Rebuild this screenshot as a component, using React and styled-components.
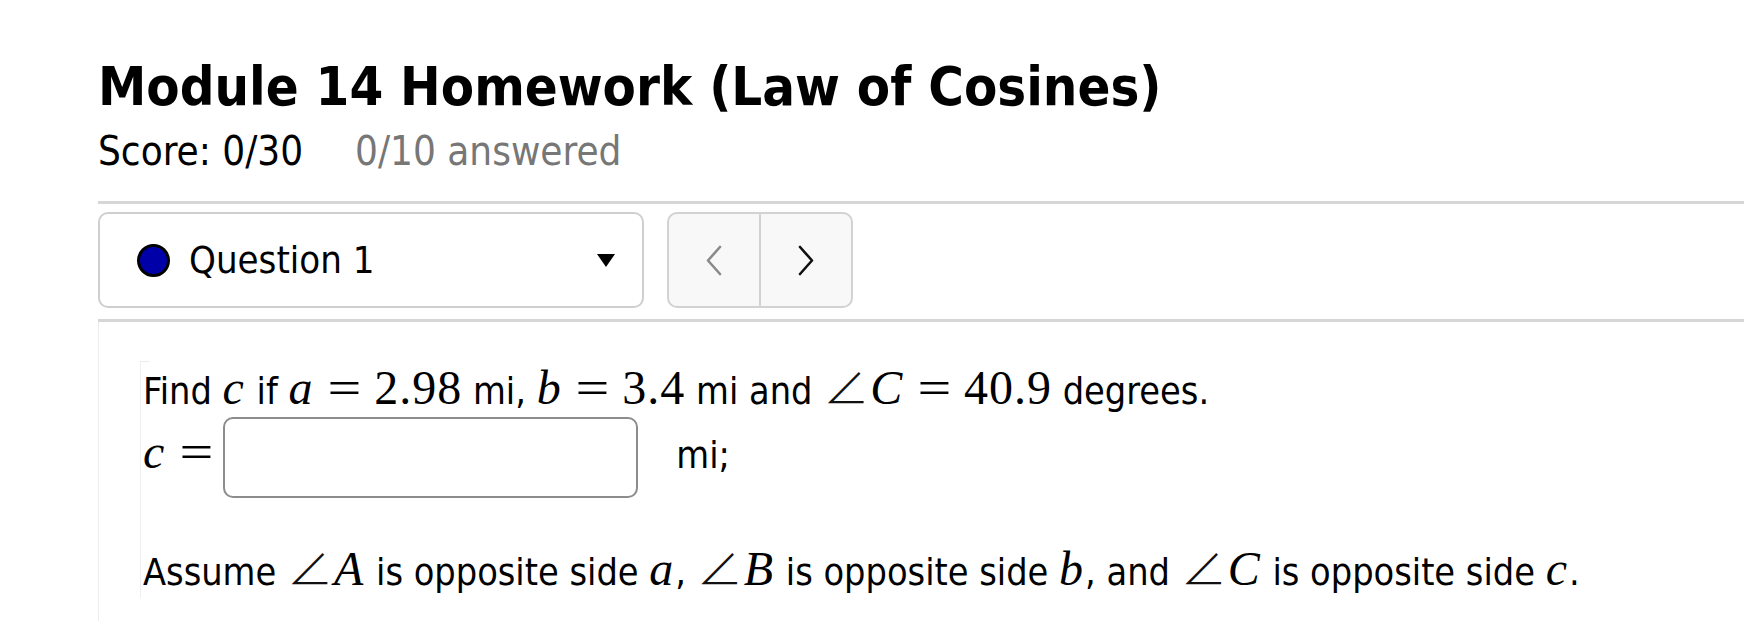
import React from "react";
import styled, { createGlobalStyle } from "styled-components";

const Global = createGlobalStyle`
  html, body { margin: 0; padding: 0; background: #ffffff; }
  body {
    font-family: "DejaVu Sans Condensed", "DejaVu Sans", sans-serif;
    color: #000;
  }
`;

const Page = styled.div`
  padding: 55px 0 0 98px;
  box-sizing: border-box;
  width: 1744px;
  height: 621px;
  overflow: hidden;
`;

const Title = styled.h1`
  margin: 0;
  font-size: 54px;
  line-height: 64px;
  font-weight: bold;
  white-space: nowrap;
`;

const ScoreLine = styled.div`
  margin-top: 9px;
  font-size: 40px;
  line-height: 46px;
  display: flex;
  gap: 52px;
`;

const Muted = styled.span`
  color: #777;
`;

const Rule = styled.div`
  height: 3px;
  background: #d6d6d6;
  margin-top: ${(p) => p.$top}px;
`;

const Toolbar = styled.div`
  display: flex;
  gap: 23px;
  margin-top: 8px;
  height: 96px;
`;

const Select = styled.div`
  box-sizing: border-box;
  width: 546px;
  height: 96px;
  border: 2px solid #cfcfcf;
  border-radius: 10px;
  display: flex;
  align-items: center;
  padding: 0 27px 0 37px;
  font-size: 38px;
`;

const Dot = styled.span`
  box-sizing: border-box;
  width: 33px;
  height: 33px;
  border-radius: 50%;
  background: #0000a8;
  border: 3px solid #000;
  margin-right: 19px;
  flex: none;
`;

const SelectLabel = styled.span`
  flex: 1;
`;

const Caret = styled.span`
  width: 0;
  height: 0;
  border-left: 9px solid transparent;
  border-right: 9px solid transparent;
  border-top: 13px solid #000;
`;

const NavGroup = styled.div`
  display: flex;
  box-sizing: border-box;
  height: 96px;
  border: 2px solid #d2d2d2;
  border-radius: 10px;
  overflow: hidden;
  background: #f8f8f8;
`;

const NavButton = styled.div`
  width: 90px;
  display: flex;
  align-items: center;
  justify-content: center;
  border-left: ${(p) => (p.$divider ? "2px solid #d2d2d2" : "none")};
  color: ${(p) => (p.$disabled ? "#8a8a8a" : "#111")};
`;

const Content = styled.div`
  border-left: 1px solid #ececec;
  height: 400px;
  padding: 39px 0 0 41px;
`;

const Question = styled.div`
  position: relative;
  font-size: 37.5px;
  line-height: 52px;
  padding: 4px 0 0 2px;
  border-left: 1px solid #efefef;
  &::before {
    content: "";
    position: absolute;
    left: -1px;
    top: 0;
    width: 10px;
    height: 1px;
    background: #ececec;
  }
`;

const Line = styled.div`
  white-space: pre;
  margin-top: ${(p) => p.$top || 0}px;
`;

const M = styled.span`
  font-family: "Liberation Serif", "DejaVu Serif", serif;
  font-size: 48px;
  line-height: 0;
  font-style: ${(p) => (p.$i ? "italic" : "normal")};
  letter-spacing: ${(p) => (p.$num ? "1px" : "0")};
  margin-right: ${(p) => (p.$i ? "2px" : "0")};
`;

const Eq = styled.span`
  font-family: "Liberation Serif", "DejaVu Serif", serif;
  font-size: 48px;
  line-height: 0;
  display: inline-block;
  transform: scaleX(1.25);
  margin: 0 ${(p) => (p.$end ? "0.2em" : "0.34em")} 0 0.34em;
`;

const Angle = styled.span`
  font-family: "DejaVu Sans ExtraLight", "Noto Sans CJK JP", "DejaVu Sans", sans-serif;
  font-size: 46px;
  font-weight: 200;
  line-height: 0;
  color: #111;
  margin-right: 1px;
`;

const Answer = styled.input`
  box-sizing: border-box;
  width: 415px;
  height: 81px;
  border: 2px solid #8c8c8c;
  border-radius: 10px;
  margin: 0 38px 0 4px;
  vertical-align: middle;
  background: #fff;
  outline: none;
`;

const Chevron = ({ dir }) => (
  <svg width="18" height="31" viewBox="0 0 18 31" fill="none">
    <polyline
      points={dir === "left" ? "15,2 3,15.5 15,29" : "3,2 15,15.5 3,29"}
      stroke="currentColor"
      strokeWidth="2.6"
      strokeLinecap="round"
      strokeLinejoin="round"
    />
  </svg>
);

export default function App() {
  return (
    <>
      <Global />
      <Page>
        <Title>Module 14 Homework (Law of Cosines)</Title>
        <ScoreLine>
          <span>Score: 0/30</span>
          <Muted>0/10 answered</Muted>
        </ScoreLine>
        <Rule $top={27} />
        <Toolbar>
          <Select>
            <Dot />
            <SelectLabel>Question 1</SelectLabel>
            <Caret />
          </Select>
          <NavGroup>
            <NavButton $disabled>
              <Chevron dir="left" />
            </NavButton>
            <NavButton $divider>
              <Chevron dir="right" />
            </NavButton>
          </NavGroup>
        </Toolbar>
        <Rule $top={11} />
        <Content>
          <Question>
            <Line>
              {"Find "}
              <M $i>c</M>
              {" if "}
              <M $i>a</M>
              <Eq>=</Eq>
              <M $num>2.98</M>
              {" mi, "}
              <M $i>b</M>
              <Eq>=</Eq>
              <M $num>3.4</M>
              {" mi and "}
              <Angle>∠</Angle>
              <M $i>C</M>
              <Eq>=</Eq>
              <M $num>40.9</M>
              {" degrees."}
            </Line>
            <Line>
              <M $i>c</M>
              <Eq $end>=</Eq>
              <Answer type="text" aria-label="c" />
              {"mi;"}
            </Line>
            <Line $top={48}>
              {"Assume "}
              <Angle>∠</Angle>
              <M $i>A</M>
              {" is opposite side "}
              <M $i>a</M>
              {", "}
              <Angle>∠</Angle>
              <M $i>B</M>
              {" is opposite side "}
              <M $i>b</M>
              {", and "}
              <Angle>∠</Angle>
              <M $i>C</M>
              {" is opposite side "}
              <M $i>c</M>
              {"."}
            </Line>
          </Question>
        </Content>
      </Page>
    </>
  );
}
